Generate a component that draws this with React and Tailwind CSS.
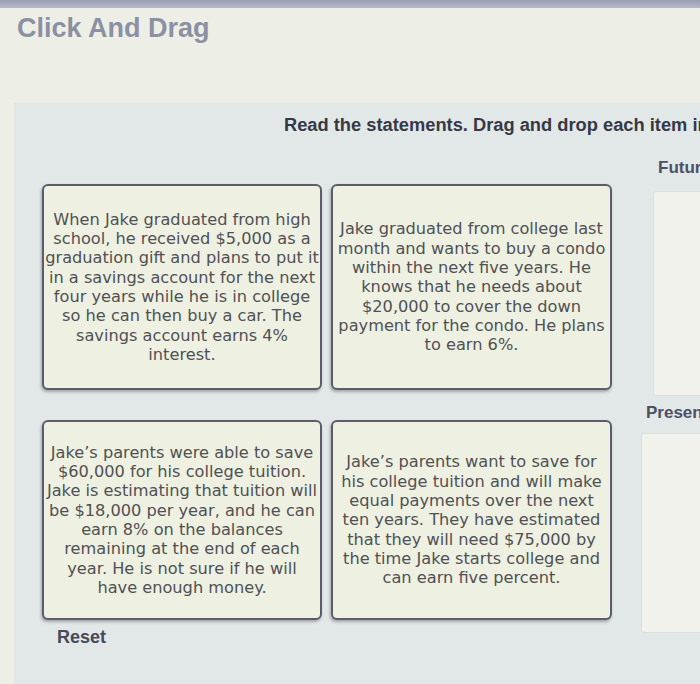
import React from "react";

const cards = [
  [
    "When Jake graduated from high",
    "school, he received $5,000 as a",
    "graduation gift and plans to put it",
    "in a savings account for the next",
    "four years while he is in college",
    "so he can then buy a car. The",
    "savings account earns 4%",
    "interest.",
  ],
  [
    "Jake graduated from college last",
    "month and wants to buy a condo",
    "within the next five years. He",
    "knows that he needs about",
    "$20,000 to cover the down",
    "payment for the condo. He plans",
    "to earn 6%.",
  ],
  [
    "Jake’s parents were able to save",
    "$60,000 for his college tuition.",
    "Jake is estimating that tuition will",
    "be $18,000 per year, and he can",
    "earn 8% on the balances",
    "remaining at the end of each",
    "year. He is not sure if he will",
    "have enough money.",
  ],
  [
    "Jake’s parents want to save for",
    "his college tuition and will make",
    "equal payments over the next",
    "ten years. They have estimated",
    "that they will need $75,000 by",
    "the time Jake starts college and",
    "can earn five percent.",
  ],
];

function Card({ lines, h }) {
  return (
    <div
      className={`flex items-center justify-center rounded-[6px] border-2 border-[#5b5e6a] bg-[#eef0e2] shadow-[-1px_2px_3px_rgba(40,40,60,0.35)] ${h}`}
    >
      <div className="text-center text-[16.2px] leading-[19.3px] text-[#505154] [font-family:'DejaVu_Sans',Verdana,sans-serif]">
        {lines.map((l, i) => (
          <div key={i} className="whitespace-nowrap">
            {l}
          </div>
        ))}
      </div>
    </div>
  );
}

export default function App() {
  return (
    <div className="w-[700px] h-[684px] overflow-hidden bg-[#edefe6] flex flex-col [font-family:'Liberation_Sans',Arial,sans-serif]">
      <div className="h-[8px] shrink-0 bg-gradient-to-b from-[#9a9eb3] to-[#b6b9c8]" />
      <div className="h-[95px] shrink-0 pl-[17px] pt-[4px]">
        <h1 className="text-[27px] leading-[32px] font-bold text-[#8b90a2]">Click And Drag</h1>
      </div>
      <div className="ml-[14px] w-[800px] flex-1 bg-[#e2e8e8] pt-[11px]">
        <p className="pl-[270px] text-[18.3px] leading-[22px] font-bold text-[#363945] whitespace-nowrap">
          Read the statements. Drag and drop each item into the correct category.
        </p>
        <div className="flex items-start">
          <div className="pl-[28px] pt-[48px] flex flex-col">
            <div className="grid grid-cols-[280px_281px] gap-x-[9px] gap-y-[30px]">
              <Card lines={cards[0]} h="h-[206px]" />
              <Card lines={cards[1]} h="h-[206px]" />
              <Card lines={cards[2]} h="h-[200px]" />
              <Card lines={cards[3]} h="h-[200px]" />
            </div>
            <div className="pl-[15px] mt-[5px] text-[18px] leading-[24px] font-bold text-[#474a57]">
              Reset
            </div>
          </div>
          <div className="ml-[29px] pt-[22px] flex flex-col w-[160px]">
            <div className="pl-[17px] text-[17px] leading-[20px] font-bold text-[#4d5163] whitespace-nowrap">
              Future Value
            </div>
            <div className="ml-[12px] mt-[13px] h-[205px] rounded-[3px] border border-[#dadfe0] bg-[#f2f2ed]" />
            <div className="pl-[5px] mt-[7px] text-[17px] leading-[20px] font-bold text-[#4d5163] whitespace-nowrap">
              Present Value
            </div>
            <div className="mt-[10px] h-[200px] rounded-[3px] border border-[#dadfe0] bg-[#f2f2ed]" />
          </div>
        </div>
      </div>
    </div>
  );
}
